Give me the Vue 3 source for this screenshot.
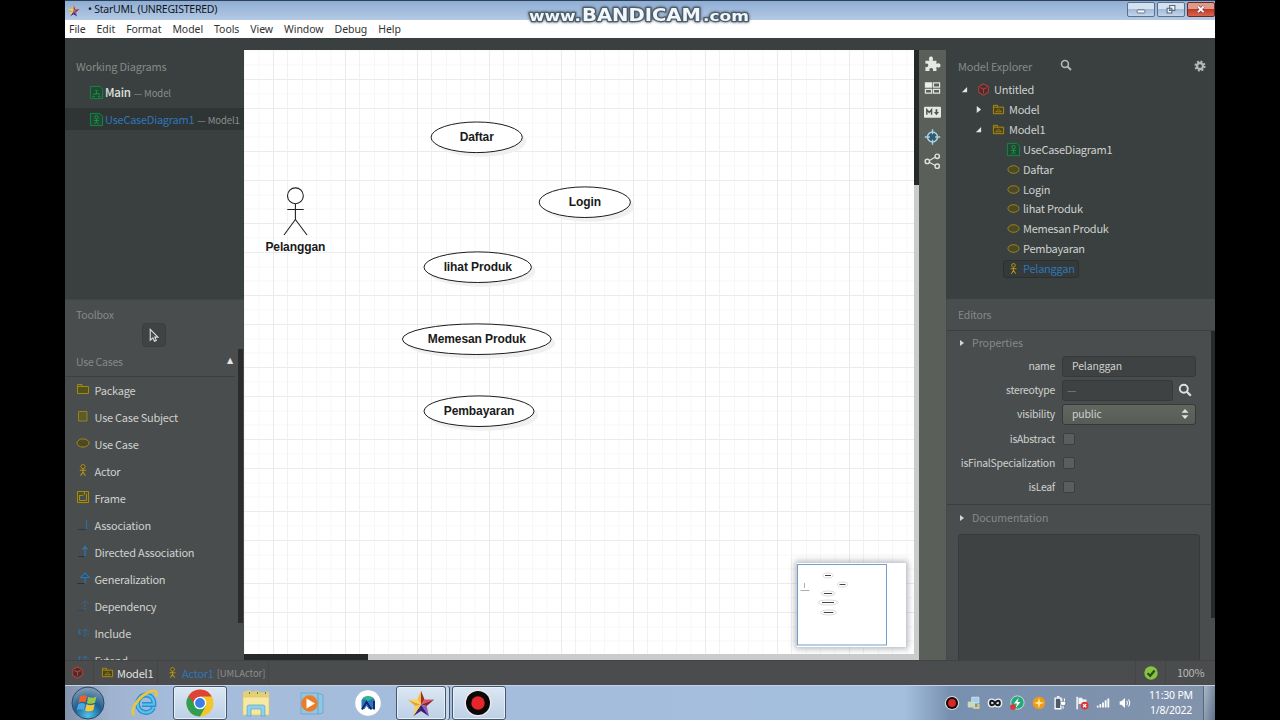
<template>
  <div class="screen">
    <svg class="sprite" xmlns="http://www.w3.org/2000/svg">
      <symbol id="cube" viewBox="0 0 14 14"><path d="M7 1 12.2 3.8V10L7 13 1.8 10V3.8ZM3.5 4.8 7 6.6 10.5 4.8M7 6.6V11" fill="#4a2c2c" stroke="#b3403a" stroke-width="1.1" /></symbol>
      <symbol id="package" viewBox="0 0 14 14"><path d="M1.5 4.5H12.5V11.5H1.5ZM1.5 4.5V2.5H6V4.5" fill="#55501c" stroke="#9c8a16" /></symbol>
      <symbol id="model" viewBox="0 0 14 14"><path d="M1.5 4.5H12.5V11.5H1.5ZM1.5 4.5V2.5H6V4.5" fill="#4a4418" stroke="#b08f16" /><path d="M4 9.5 7 6.5 10 9.5Z" fill="none" stroke="#a98a18" stroke-width=".9" /></symbol>
      <symbol id="subject" viewBox="0 0 14 14"><path d="M2.5 2.5H11V12H2.5Z" fill="#5d5c26" stroke="#8d8324" /></symbol>
      <symbol id="usecase" viewBox="0 0 14 14"><ellipse cx="7" cy="7" rx="6" ry="4.1" fill="#4b4a24" stroke="#a2861c" /></symbol>
      <symbol id="actor" viewBox="0 0 14 14"><path d="M7 5.6V9.5M3.8 7.2H10.2M7 9 4.6 12.6M7 9 9.4 12.6" fill="none" stroke="#b3921a" stroke-width="1.1" /><circle cx="7" cy="3.6" r="2" fill="#4b4519" stroke="#b3921a" /></symbol>
      <symbol id="frame" viewBox="0 0 14 14"><path d="M1.5 1.5H12.5V12.5H1.5ZM3.5 5V10.5H10.5V3.5M3.5 5.5H7L8.5 4V2" fill="#55501c" stroke="#a08d18" /></symbol>
      <symbol id="assoc" viewBox="0 0 14 14"><path d="M2 12.5H11" stroke="#223c50" fill="none" /><path d="M10.5 12.5V3" stroke="#2b6da0" stroke-width="1.2" fill="none" /></symbol>
      <symbol id="directed" viewBox="0 0 14 14"><path d="M2 12.5H9" stroke="#22364a" fill="none" /><path d="M9 12.5V2.5M6.5 5.5 9 2.5 11.5 5.5" stroke="#2b78b4" stroke-width="1.2" fill="none" /></symbol>
      <symbol id="general" viewBox="0 0 14 14"><path d="M1 12.5H9" stroke="#22364a" fill="none" /><path d="M9 12.5V6M5 6.5H13L9 2Z" stroke="#2b78b4" stroke-width="1.1" fill="#27506e" /></symbol>
      <symbol id="depend" viewBox="0 0 14 14"><path d="M1 12.5H9" stroke="#284c66" fill="none" /><path d="M9 12V3M6 5.5 9 3 12.5 5.5" stroke="#2d6f9e" stroke-dasharray="2 1.2" fill="none" /></symbol>
      <symbol id="include" viewBox="0 0 14 14"><path d="M1 12H7" stroke="#284c66" fill="none" /><path d="M2 5H5M3.5 5V8.500M2 8.500H5M9 12V4M6.500 6.500 9 4 12.500 6.500M11 9H13" stroke="#2b6da0" fill="none" /></symbol>
      <symbol id="classdiag" viewBox="0 0 16 16"><path d="M1.500 1.500H11.500L14.500 4.500V14.500H1.500Z" fill="#1d4a30" stroke="#168646" /><path d="M3.500 12.500H6.500M9.500 12.500H12.500M5 11V9.500H11V11M8 9.500V7M6.500 6H9.500" stroke="#22904f" fill="none" /></symbol>
      <symbol id="casediag" viewBox="0 0 16 16"><path d="M1.500 1.500H11.500L14.500 4.500V14.500H1.500Z" fill="#1d4a30" stroke="#168646" /><circle cx="8" cy="5.500" r="1.800" fill="none" stroke="#22904f" /><path d="M8 7.500V10.500M5.500 9H10.500M8 10.500 6 13M8 10.500 10 13" stroke="#22904f" fill="none" /></symbol>
      <symbol id="search" viewBox="0 0 14 14"><circle cx="5.8" cy="5.8" r="4" fill="none" stroke="currentColor" stroke-width="1.9" /><path d="M8.8 8.8 12.8 12.8" stroke="currentColor" stroke-width="2.3" /></symbol>
      <symbol id="star" viewBox="0 0 32 32">
        <path d="M16 2 20 12 16 18Z" fill="#a02a2c" /><path d="M16 2 12 12 16 18Z" fill="#f0c230" />
        <path d="M20 12H31L16 18Z" fill="#e0556a" /><path d="M31 12 22.500 19.500 16 18Z" fill="#8c2430" />
        <path d="M22.500 19.500 25 31 16 18Z" fill="#8a60b8" /><path d="M25 31 16 25V18Z" fill="#3a1c70" />
        <path d="M16 25 7 31 16 18Z" fill="#4a2478" /><path d="M7 31 9.500 19.500 16 18Z" fill="#f6d458" />
        <path d="M9.500 19.500 1 12 16 18Z" fill="#e8a424" /><path d="M1 12H12L16 18Z" fill="#fbd65c" />
      </symbol>
      <symbol id="rec" viewBox="0 0 28 28"><circle cx="14" cy="14" r="13.5" fill="#e9e9e9" /><circle cx="14" cy="14" r="12" fill="#080808" /><circle cx="14" cy="14" r="6.700" fill="#e8262a" /></symbol>
    </svg>

    <div class="window">
      <header class="titlebar">
        <svg class="app-icon"><use href="#star" /></svg>
        <span class="title">• StarUML (UNREGISTERED)</span>
        <div class="win-buttons">
          <span class="wb"><svg viewBox="0 0 28 15"><rect x="9.5" y="8" width="9" height="3.5" rx="1" fill="#fff" stroke="#55667c" /></svg></span>
          <span class="wb"><svg viewBox="0 0 28 15"><path d="M12.5 3H18.500V8.500H12.500ZM9.500 6H15V11.500H9.500Z" fill="#f4f7fb" stroke="#55667c" stroke-width="1.2" /><path d="M11.500 8.500H13.500" stroke="#55667c" /></svg></span>
          <span class="wb close"><svg viewBox="0 0 28 15"><path d="M10.500 4 17 10.500M17 4 10.500 10.500" stroke="#7a3a38" stroke-width="3.600" /><path d="M10.500 4 17 10.500M17 4 10.500 10.500" stroke="#fff" stroke-width="2.200" /></svg></span>
        </div>
      </header>
      <nav class="menubar">
        <span v-for="m in menus" :key="m">{{ m }}</span>
      </nav>

      <main class="workspace">
        <aside class="left">
          <section class="working">
            <h3>Working Diagrams</h3>
            <div v-for="d in diagrams" :key="d.name" :class="['diagram-row', { active: d.active }]">
              <svg><use :href="'#' + d.icon" /></svg>
              <b>{{ d.name }}</b><small>— {{ d.owner }}</small>
            </div>
          </section>
          <section class="toolbox">
            <h3>Toolbox</h3>
            <div class="pointer">
              <svg viewBox="0 0 12 16"><path d="M2 1.500V13L4.800 10.500 6.500 14.200 8.500 13.200 6.900 9.700H10.200Z" fill="#4a4d4e" stroke="#dcdedc" stroke-width="1.200" /></svg>
            </div>
            <div class="group"><span>Use Cases</span><i>▲</i></div>
            <ul class="tools">
              <li v-for="t in tools" :key="t.name"><svg><use :href="'#' + t.icon" /></svg>{{ t.name }}</li>
            </ul>
            <div class="thumb"></div>
          </section>
        </aside>

        <section class="center">
          <div class="canvas">
            <svg class="diagram" width="670" height="604" viewBox="244 50 670 604">
              <defs>
                <pattern id="grid" x="244" y="50" width="72" height="72" patternUnits="userSpaceOnUse">
                  <path d="M0.500 0V72M14.900 0V72M58.500 0V72M0 1H72M0 14.900H72M0 43.800H72" stroke="#f7f7f7" fill="none" />
                  <path d="M43.500 0V72" stroke="#f1f1f1" fill="none" />
                  <path d="M29.500 0V72M72.500 0V72M0 29.500H72M0 58.500H72" stroke="#ebebeb" fill="none" />
                </pattern>
              </defs>
              <rect x="244" y="50" width="670" height="604" fill="url(#grid)" />
              <g v-for="u in useCases" :key="u.name">
                <ellipse :cx="u.x + 4" :cy="u.y + 4" :rx="u.rx" ry="15.500" fill="#f0f0f0" />
                <ellipse :cx="u.x" :cy="u.y" :rx="u.rx" ry="15.300" fill="#fff" stroke="#1c1c1c" />
                <text :x="u.x" :y="u.y + 4" text-anchor="middle">{{ u.name }}</text>
              </g>
              <g fill="none" stroke="#222" stroke-width="1.100">
                <circle cx="295.400" cy="195.800" r="7.900" fill="#fff" />
                <path d="M295.400 203.700V219.500M287.300 209.500H303.700M295.400 219.500 284 235M295.400 219.500 307 235" />
              </g>
              <text x="295.300" y="251" text-anchor="middle">Pelanggan</text>
            </svg>
            <div class="minimap">
              <svg width="109" height="84" viewBox="0 0 109 84">
                <g v-for="m in miniNodes" :key="m.y">
                  <ellipse :cx="m.x" :cy="m.y" :rx="m.rx" ry="2.500" fill="#fff" stroke="#ccc" stroke-width=".7" />
                  <path :d="`M${m.x - m.rx * .6} ${m.y}h${m.rx * 1.2}`" stroke="#444" stroke-width="1" />
                </g>
                <path d="M7.500 20V25M3.500 27.500H12.500" stroke="#999" stroke-width=".8" />
                <rect x=".500" y="1.500" width="89" height="80.500" fill="none" stroke="#6fa0cc" />
              </svg>
            </div>
          </div>
          <div class="vscroll"><i></i></div>
          <div class="hscroll"><i></i></div>
        </section>

        <aside class="toolbar">
          <svg viewBox="0 0 18 18"><path d="M1.500 5.500H6C4.600 3.800 5.200 1 7.400 1S10.300 3.800 8.900 5.500H13.200V9C15 7.700 17.500 8.300 17.500 10.500S15 13.200 13.200 12V16.500H9.300C10.200 14.800 9.500 13.200 7.700 13.200S5 14.800 6 16.500H1.500V12C3.300 12.800 4.500 12 4.500 10.400S3.300 8 1.500 8.900Z" fill="#e6e8e4" /></svg>
          <svg viewBox="0 0 18 18"><path d="M1.500 3.500H8V8H1.500Z" fill="#f0f1ee" /><path d="M1.500 3.500H8V8H1.500ZM10 3.500H16.500V8H10ZM1.500 10.500H8V14.500H1.500ZM10 10.500H16.500V14.500H10Z" fill="none" stroke="#e3e5e1" stroke-width="1.300" /></svg>
          <svg viewBox="0 0 18 18"><rect x="0" y="3.500" width="18" height="11.500" rx="1" fill="#e6e8e4" /><path d="M3 12V6.500L5.500 9.500 8 6.500V12" fill="none" stroke="#50554f" stroke-width="1.500" /><path d="M13.200 6V10" stroke="#50554f" stroke-width="1.800" /><path d="M10.500 9H15.900L13.200 12.500Z" fill="#50554f" /></svg>
          <svg viewBox="0 0 18 18"><circle cx="9" cy="9" r="5.300" fill="#365a6c" stroke="#a5d3e6" stroke-width="1.700" /><path d="M9 .8V6.200M9 11.800V17.200M.8 9H6.200M11.800 9H17.200" stroke="#a5d3e6" stroke-width="1.500" /></svg>
          <svg viewBox="0 0 18 18"><path d="M4 9.500 13.500 4M4 9.500 13.500 14.500" stroke="#dfe1dd" stroke-width="1.300" /><g fill="#585d57" stroke="#dfe1dd" stroke-width="1.500"><circle cx="3.500" cy="9.500" r="2.300" /><circle cx="14" cy="4" r="2.300" /><circle cx="14" cy="14.500" r="2.300" /></g></svg>
        </aside>

        <aside class="right">
          <section class="explorer">
            <div class="explorer-head">
              <h3>Model Explorer</h3>
              <svg class="find"><use href="#search" /></svg>
              <svg class="gear" viewBox="0 0 12 12"><circle cx="6" cy="6" r="4.600" fill="none" stroke="#b4b7b4" stroke-width="2" stroke-dasharray="1.900 1.710" /><circle cx="6" cy="6" r="3" fill="none" stroke="#b4b7b4" stroke-width="2.300" /></svg>
            </div>
            <ul class="tree">
              <li v-for="n in tree" :key="n.name" :class="['level-' + n.level, { picked: n.picked }]">
                <svg v-if="n.level < 3" class="arrow" viewBox="0 0 8 8"><path :d="n.open ? 'M7 1V7H1Z' : 'M2 0 7 4 2 8Z'" fill="#e2e4e2" /></svg>
                <div class="node"><svg :class="{ doc: n.icon === 'casediag' }"><use :href="'#' + n.icon" /></svg><span>{{ n.name }}</span></div>
              </li>
            </ul>
          </section>
          <section class="editors">
            <h3>Editors</h3>
            <div class="props">
              <h4><i></i>Properties</h4>
              <div class="field"><label>name</label><div class="input">Pelanggan</div></div>
              <div class="field"><label>stereotype</label><div class="input short">—</div><svg><use href="#search" /></svg></div>
              <div class="field"><label>visibility</label><div class="input select">public<svg viewBox="0 0 8 10"><path d="M4 0 7.500 3.800H.500ZM4 10 7.500 6.200H.500Z" fill="#e0e2e0" /></svg></div></div>
              <div v-for="c in checks" :key="c" class="field"><label>{{ c }}</label><div class="check"></div></div>
            </div>
            <div class="docs">
              <h4><i></i>Documentation</h4>
              <div class="textarea"></div>
            </div>
            <div class="thumb"></div>
          </section>
        </aside>
      </main>

      <footer class="statusbar">
        <div class="crumb root"><svg><use href="#cube" /></svg></div>
        <div class="crumb mid"><svg><use href="#model" /></svg><b>Model1</b></div>
        <div class="crumb last"><svg><use href="#actor" /></svg><em>Actor1</em><small>[UMLActor]</small></div>
        <div class="ok"><svg viewBox="0 0 14 14"><circle cx="7" cy="7" r="6.700" fill="#86c440" /><path d="M3.500 7.200 6.200 9.800 10.600 4.500" fill="none" stroke="#2d4a1c" stroke-width="2.200" /></svg></div>
        <div class="zoom">100%</div>
      </footer>

      <footer class="taskbar">
        <div class="slot orb">
          <svg viewBox="0 0 34 34">
            <defs><radialGradient id="orbFill" cx=".5" cy=".9" r=".9"><stop offset="0" stop-color="#4fc3ea" /><stop offset=".5" stop-color="#1d5f92" /><stop offset="1" stop-color="#8ba2b8" /></radialGradient></defs>
            <circle cx="17" cy="17" r="16" fill="url(#orbFill)" stroke="#2d4766" />
            <path d="M9 10.500C11.500 9 14 9 16 10.200L14.500 16.500C12.500 15.300 10 15.500 7.500 16.800Z" fill="#e8622c" />
            <path d="M17.300 10.800C20 12 22.500 12 25.500 10.500L24 16.800C21 18.200 18.500 18 15.800 16.900Z" fill="#98c848" />
            <path d="M7.200 18C9.700 16.800 12 16.800 14.200 17.900L12.800 24C10.500 22.800 8 23 5.800 24Z" fill="#4aa6e4" />
            <path d="M15.500 18.300C18 19.500 20.800 19.600 23.700 18.200L22.200 24.300C19.500 25.600 16.800 25.700 14.100 24.500Z" fill="#f6c938" />
          </svg>
        </div>
        <div class="slot ie">
          <svg viewBox="0 0 30 30">
            <path d="M23.500 19.500C22 23 19 24.500 16 24.500 11 24.500 7.500 20.500 7.500 16S11 7 16 7C21 7 24.500 11 24 16.500H12" fill="none" stroke="#2592d0" stroke-width="4.800" />
            <path d="M23.500 19.500C22 23 19 24.500 16 24.500 11 24.500 7.500 20.500 7.500 16S11 7 16 7C21 7 24.500 11 24 16.500H12" fill="none" stroke="#5cc0ee" stroke-width="2.200" />
            <path d="M4.500 27C-1 23 8 9.500 18 4.500 25 1 28 3 26 8.500" fill="none" stroke="#ecc63a" stroke-width="2.600" />
          </svg>
        </div>
        <div class="slot task">
          <svg viewBox="0 0 28 28">
            <circle cx="14" cy="14" r="13.500" fill="#f4c62d" />
            <path d="M14 14 2.300 7.250A13.500 13.500 0 0 0 14 27.500L19.500 17.500Z" fill="#2f9e4e" />
            <path d="M14 14H8L2.300 7.250A13.500 13.500 0 0 1 25.800 7.500H14Z" fill="#dd4336" />
            <circle cx="14" cy="14" r="6.300" fill="#fff" /><circle cx="14" cy="14" r="4.900" fill="#3c7fe6" />
          </svg>
        </div>
        <div class="slot explorer-icon">
          <svg viewBox="0 0 30 28">
            <path d="M2 3 9 1 10.500 3 17 1.500 18.500 3.500 28 2.500V24H2Z" fill="#e5cf75" /><path d="M2 8H28V26H2Z" fill="#f6e9a2" stroke="#dcc266" stroke-width=".6" />
            <path d="M8 4H9M16 4H17M24 4H25" stroke="#3f8a54" stroke-width="2" />
            <path d="M6 27V18Q6 16 8 16H22Q24 16 24 18V27H20V20H10V27Z" fill="#8fd0ea" stroke="#5da4cc" stroke-width=".7" />
          </svg>
        </div>
        <div class="slot media">
          <svg viewBox="0 0 26 24"><path d="M3 2H20L25 4V22L20 23H3Z" fill="#8fc6e4" stroke="#6aa2c6" stroke-width=".8" /><path d="M20 2V23" stroke="#6aa2c6" /><circle cx="11.500" cy="12.500" r="8.300" fill="#ec7d28" /><path d="M8.500 7.500 17 12.500 8.500 17.500Z" fill="#fff" /></svg>
        </div>
        <div class="slot studio">
          <svg viewBox="0 0 28 28"><circle cx="14" cy="14" r="12.800" fill="#fff" /><path d="M7.500 18V11.500A7 5.500 0 0 1 21 11.500V20H7.500Z" fill="#2b77c4" /><path d="M8.500 9A7 5.500 0 0 1 19.500 9L14 12Z" fill="#35b58a" /><path d="M8 20.500 12.500 13 17.500 20.500M20 12V20.500" stroke="#16275e" stroke-width="1.800" fill="none" /><path d="M10 21 12.500 17 15.500 21Z" fill="#fff" /></svg>
        </div>
        <div class="slot task stacked"><svg><use href="#star" /></svg></div>
        <div class="slot task rec"><svg><use href="#rec" /></svg></div>

        <div class="tray">
          <svg viewBox="0 0 18 18"><circle cx="9" cy="9" r="8" fill="#d9d9d9" /><circle cx="9" cy="9" r="6.800" fill="#160808" /><circle cx="9" cy="9" r="4.400" fill="#d6282b" /></svg>
          <svg viewBox="0 0 18 18"><path d="M6.500 2.500H14.500V9H6.500Z" fill="#9fd0e8" stroke="#d8e4ee" /><path d="M2.500 8H9.500V13.500H2.500Z" fill="#c9dfa0" stroke="#d0dce0" /><path d="M8 14.500H14V10" stroke="#d9c680" stroke-width="2.500" fill="none" /></svg>
          <svg viewBox="0 0 18 18"><path d="M9 9C7 5 3 5.500 3 9S7 13 9 9 15 5.500 15 9 11 13 9 9Z" fill="none" stroke="#eceff2" stroke-width="4.500" /><path d="M9 9C7 5.500 3.500 6 3.500 9S7 12.500 9 9 14.500 5.500 14.500 9 11 12.500 9 9Z" fill="none" stroke="#14181c" stroke-width="2.200" /></svg>
          <svg viewBox="0 0 18 18"><circle cx="9.500" cy="8.500" r="7.500" fill="#28a878" stroke="#c8ecdc" /><path d="M11 3 5.500 9.500H9L7.500 14.500 13 8H9.500Z" fill="#fff" /><circle cx="4.500" cy="13.500" r="3.200" fill="#d83a3a" /></svg>
          <svg viewBox="0 0 18 18"><circle cx="9" cy="9" r="7" fill="#ee9a1c" /><path d="M9 3.500 10.300 7.700 14.500 9 10.300 10.300 9 14.500 7.700 10.300 3.500 9 7.700 7.700Z" fill="#ffe98a" /></svg>
          <svg viewBox="0 0 18 18"><path d="M3.500 3.500H10V15.500H3.500Z" fill="#4c5a6c" stroke="#fff" stroke-width="1.500" /><path d="M5.500 2H8.500" stroke="#fff" stroke-width="1.500" /><path d="M9.500 7H15.500V10Q15.500 12 12.500 12 9.500 12 9.500 10ZM11 4.500V7M14 4.500V7M12.500 12V15.500" stroke="#3d4a5c" stroke-width=".6" fill="#fff" /><path d="M11 4V7M14 4V7M12.500 12V15.500" stroke="#fff" stroke-width="1.300" /></svg>
          <svg viewBox="0 0 18 18"><path d="M3.500 2V16" stroke="#fff" stroke-width="1.600" /><path d="M5 3H9L10 5H14V10H5Z" fill="#f5f5f5" /><circle cx="12" cy="12" r="4.300" fill="#dc3434" /><path d="M10.200 10.200 13.800 13.800M13.800 10.200 10.200 13.800" stroke="#fff" stroke-width="1.400" /></svg>
          <svg viewBox="0 0 18 18"><path d="M3 14V12M6 14V10.500M9 14V8.500M12 14V6M15 14V4" stroke="#fff" stroke-width="2" /></svg>
          <svg viewBox="0 0 18 18"><path d="M3 7H5L9 3.500V14.500L5 11H3Z" fill="#fff" /><path d="M11 6.500Q12.500 9 11 11.500M13 5Q15.500 9 13 13" stroke="#fff" stroke-width="1.200" fill="none" /></svg>
        </div>
        <div class="clock"><span>11:30 PM</span><span>1/8/2022</span></div>
        <div class="peek"></div>
      </footer>

      <svg class="watermark" width="240" height="26" viewBox="520 2 240 26">
        <g class="glow">
          <text x="529" y="21" font-size="14" textLength="52" lengthAdjust="spacingAndGlyphs">www.</text>
          <text x="582" y="21" font-size="17" textLength="119" lengthAdjust="spacingAndGlyphs">BANDICAM</text>
          <text x="703" y="21" font-size="14" textLength="46" lengthAdjust="spacingAndGlyphs">.com</text>
        </g>
      </svg>
    </div>
  </div>
</template>

<script setup>
const menus = ['File', 'Edit', 'Format', 'Model', 'Tools', 'View', 'Window', 'Debug', 'Help']

const diagrams = [
  { name: 'Main', owner: 'Model', icon: 'classdiag' },
  { name: 'UseCaseDiagram1', owner: 'Model1', icon: 'casediag', active: true },
]

const tools = [
  { name: 'Package', icon: 'package' },
  { name: 'Use Case Subject', icon: 'subject' },
  { name: 'Use Case', icon: 'usecase' },
  { name: 'Actor', icon: 'actor' },
  { name: 'Frame', icon: 'frame' },
  { name: 'Association', icon: 'assoc' },
  { name: 'Directed Association', icon: 'directed' },
  { name: 'Generalization', icon: 'general' },
  { name: 'Dependency', icon: 'depend' },
  { name: 'Include', icon: 'include' },
  { name: 'Extend', icon: 'include' },
]

const useCases = [
  { name: 'Daftar', x: 476.7, y: 137.3, rx: 45.6 },
  { name: 'Login', x: 584.8, y: 202.2, rx: 45.6 },
  { name: 'lihat Produk', x: 477.7, y: 267.2, rx: 53.7 },
  { name: 'Memesan Produk', x: 476.8, y: 339.2, rx: 74.4 },
  { name: 'Pembayaran', x: 479, y: 411.2, rx: 55 },
]

const miniNodes = [
  { x: 31, y: 12.5, rx: 5 },
  { x: 45.5, y: 21.5, rx: 5 },
  { x: 31, y: 30.5, rx: 7 },
  { x: 31, y: 39.5, rx: 10 },
  { x: 31.5, y: 49.5, rx: 8 },
]

const tree = [
  { name: 'Untitled', icon: 'cube', level: 1, open: true },
  { name: 'Model', icon: 'model', level: 2 },
  { name: 'Model1', icon: 'model', level: 2, open: true },
  { name: 'UseCaseDiagram1', icon: 'casediag', level: 3 },
  { name: 'Daftar', icon: 'usecase', level: 3 },
  { name: 'Login', icon: 'usecase', level: 3 },
  { name: 'lihat Produk', icon: 'usecase', level: 3 },
  { name: 'Memesan Produk', icon: 'usecase', level: 3 },
  { name: 'Pembayaran', icon: 'usecase', level: 3 },
  { name: 'Pelanggan', icon: 'actor', level: 3, picked: true },
]

const checks = ['isAbstract', 'isFinalSpecialization', 'isLeaf']
</script>

<style>
body { margin: 0; background: #000; overflow: hidden; }
</style>

<style scoped>
* { box-sizing: border-box; }
ul, h3, h4 { margin: 0; padding: 0; list-style: none; font-weight: 400; }
svg { display: block; flex: none; }
i { font-style: normal; }
.sprite { position: absolute; width: 0; height: 0; }
.screen { width: 1280px; height: 720px; padding: 0 65px; background: #000; }
.window { position: relative; width: 1150px; height: 720px; display: flex; flex-direction: column; font-family: "Noto Sans CJK SC", "Noto Sans", sans-serif; font-size: 11px; letter-spacing: -.25px; line-height: 16px; color: #cfd1cf; white-space: nowrap; }

.titlebar { height: 20px; display: flex; align-items: center; padding-left: 2px; background: linear-gradient(#8fadd3, #b4cae5); border-top: 1px solid #2c4058; font-family: "Noto Sans", sans-serif; color: #10151c; }
.app-icon { width: 13px; height: 13px; }
.title { margin: -3px 0 0 8px; font-size: 10.5px; letter-spacing: -.24px; }
.win-buttons { margin-left: auto; align-self: flex-start; display: flex; gap: 2px; }
.wb { width: 28px; height: 15px; margin-top: 1px; border: 1px solid #5b7089; border-radius: 2px; background: linear-gradient(#d3e1f0 45%, #a4bcd8 50%, #c2d5ea); }
.wb svg { width: 26px; height: 13px; }
.wb.close { border-color: #6b2a24; background: linear-gradient(#e09a8c 45%, #c3392a 50%, #d8654c); }
.menubar { height: 18px; flex: none; display: flex; align-items: center; gap: 11px; padding: 0 0 1px 4px; background: #fff; color: #333; font-family: "Noto Sans", sans-serif; font-size: 10.5px; letter-spacing: -.06px; }

.workspace { height: 622px; flex: none; display: flex; background: #3a403f; }
h3 { font-size: 11px; letter-spacing: -.2px; color: #858a88; }
.left { width: 179px; display: flex; flex-direction: column; }
.working { height: 261px; padding-top: 20px; }
.working h3 { padding-left: 11px; }
.diagram-row { height: 22px; display: flex; align-items: center; padding-left: 24px; margin-top: 7px; }
.diagram-row + .diagram-row { margin-top: 5px; }
.diagram-row svg { width: 15px; height: 15px; }
.diagram-row b { margin-left: 1px; font-weight: 500; color: #dfe1df; font-size: 11.5px; }
.diagram-row small { margin: 1px 0 0 3px; font-size: 9.5px; letter-spacing: -.1px; color: #8b8f8d; }
.diagram-row.active { background: #2f3435; }
.diagram-row.active b { color: #2f76b8; font-weight: 400; font-size: 11px; letter-spacing: -.25px; }
.toolbox { position: relative; height: 361px; overflow: hidden; background: #4a4d4e; border-top: 1px solid #414545; display: flex; flex-direction: column; }
.toolbox h3 { padding: 7px 0 1px 11px; font-size: 10.5px; }
.pointer { width: 24px; height: 24px; flex: none; margin: -1px 0 0 77px; border: 1px solid #3b3e3f; border-radius: 4px; background: #404344; display: flex; align-items: center; justify-content: center; }
.pointer svg { width: 12px; height: 15px; }
.group { height: 28px; flex: none; margin: 2px 9px 0 0; padding: 0 2px 2px 11px; display: flex; align-items: center; justify-content: space-between; border-bottom: 1px solid #3c4041; font-size: 10.5px; color: #858a88; }
.group i { font-family: "DejaVu Sans", sans-serif; color: #e4e6e4; font-size: 8px; margin-top: -2px; }
.tools li { height: 27px; display: flex; align-items: center; gap: 4.5px; padding: 0 0 2px 11px; }
.tools svg { width: 14px; height: 14px; margin-top: -2px; }
.toolbox .thumb { position: absolute; right: 1px; top: 49px; width: 5px; height: 274px; background: #2a2c2d; }

.center { width: 675px; padding-top: 12px; display: grid; grid-template: 604px 6px / 670px 5px; background: #3a403f; }
.canvas { position: relative; background: #fff; overflow: hidden; }
.diagram text { font: bold 12px "Liberation Sans", Arial, sans-serif; letter-spacing: -.1px; fill: #1a1a1a; }
.minimap { position: absolute; left: 553px; top: 513px; width: 109px; height: 84px; background: #fff; box-shadow: 0 0 6px 2px rgba(90, 100, 110, .45); }
.vscroll { background: #c9cccb; }
.vscroll i { display: block; height: 135px; background: #25292a; }
.hscroll { grid-column: 1 / 3; background: #c9cccb; }
.hscroll i { display: block; width: 124px; height: 6px; background: #25292a; }
.toolbar { width: 27px; height: 610px; margin-top: 12px; padding: 5px 0 0 5px; display: flex; flex-direction: column; gap: 6.2px; background: #5a5f59; }
.toolbar svg { width: 17px; height: 18px; }

.right { width: 269px; display: flex; flex-direction: column; }
.explorer { height: 261px; padding-top: 18px; }
.explorer-head { height: 20px; display: flex; align-items: center; padding: 0 9px 0 12px; }
.explorer-head h3 { width: 74px; }
.explorer-head .find { width: 12px; height: 12px; margin: -3px 0 0 28px; color: #b4b7b4; }
.explorer-head .gear { width: 12px; height: 12px; margin-left: auto; }
.tree { padding-top: 4px; }
.tree li { height: 19.85px; display: flex; align-items: center; }
.tree .level-1 { padding-left: 15px; }
.tree .level-2 { padding-left: 29px; }
.tree .level-3 { padding-left: 57px; }
.arrow { width: 7px; height: 7px; }
.node { height: 18px; display: flex; align-items: center; gap: 3px; padding: 0 3px; border: 1px solid transparent; border-radius: 3px; }
.node span { margin-top: -1px; }
.level-1 .node { margin-left: 5px; }
.level-2 .node { margin-left: 6px; }
.level-1 .node, .level-2 .node { gap: 4px; }
.level-1 .node, .level-2 .node { padding-left: 2px; }
.node svg { width: 13px; height: 13px; }
.level-1 .node svg, .level-2 .node svg { margin-left: 1px; }
.node svg.doc { width: 15px; height: 15px; margin: 0 -1px; }
.picked .node { border-color: #2b3031; background: #343939; color: #2f76b8; }

.editors { position: relative; height: 361px; overflow: hidden; background: #4a4d4e; border-left: 1px solid #454948; }
.editors h3 { height: 32px; padding: 8px 0 0 11px; border-bottom: 1px solid #3b3f3f; font-size: 10.5px; }
h4 { display: flex; align-items: center; gap: 8px; padding-left: 13px; font-size: 10.6px; letter-spacing: -.05px; color: #858a88; }
h4 i { border: 3px solid transparent; border-left: 4px solid #d4d6d4; border-right: 0; }
.props { height: 174px; padding-top: 4px; margin-right: 4px; border-bottom: 1px solid #3b3f3f; }
.props h4 { margin-bottom: 3px; }
.field { height: 24.2px; display: flex; align-items: center; font-size: 10.4px; }
.field label { width: 108px; margin-right: 7px; text-align: right; }
.input { width: 134px; height: 21px; padding: 0 9px; border: 1px solid #35393a; border-radius: 3px; background: #3e4242; line-height: 18px; letter-spacing: -.1px; }
.input.short { width: 111px; color: #7a7e7c; padding-left: 4px; }
.field > svg { width: 14px; height: 14px; margin-left: 5px; color: #dfe1df; }
.select { display: flex; justify-content: space-between; align-items: center; padding-right: 6px; background: linear-gradient(#61665f, #575c57); }
.select svg { width: 8px; height: 10px; }
.check { width: 12px; height: 12px; margin-left: 1px; border: 1px solid #3b3f3f; border-radius: 2px; background: #5a5e5c; }
.docs h4 { padding-top: 5px; }
.textarea { width: 242px; height: 140px; margin: 8px 0 0 11px; border: 1px solid #363a3a; border-radius: 3px; background: #3e4242; }
.editors .thumb { position: absolute; right: 0; top: 32px; width: 4px; height: 287px; background: #272a2b; }

.statusbar { height: 25px; flex: none; display: flex; align-items: center; background: #4a4c4d; border-top: 1px solid #404343; }
.crumb { height: 24px; display: flex; align-items: center; padding-bottom: 1px; border-right: 1px solid #434647; }
.crumb svg { width: 13px; height: 13px; }
.crumb.root { width: 29px; padding-left: 6px; }
.crumb.mid { width: 64px; padding-left: 7px; gap: 3px; }
.crumb.last { width: 111px; padding-left: 8px; gap: 3px; }
.crumb b { font-weight: 400; color: #e0e2e0; }
.crumb em { font-style: normal; color: #2f76b8; }
.crumb small { font-size: 9.5px; letter-spacing: -.1px; color: #8b8f8d; }
.ok { width: 31px; height: 24px; margin-left: auto; padding: 5px 0 0 8px; border: solid #434647; border-width: 0 1px; }
.ok svg { width: 14px; height: 14px; }
.zoom { width: 49px; padding: 0 0 2px 11px; font-size: 11px; letter-spacing: -.3px; color: #b7bab8; }

.taskbar { height: 35px; flex: none; display: flex; align-items: center; border-top: 1px solid #c4d2e2; background: linear-gradient(90deg, #8292ab 0, #9fb3cf 45px, #a5bcdb 110px, #a4bedd 840px, #7890b0 885px, #8293ab 100%); }
.slot { height: 34px; display: flex; align-items: center; justify-content: center; }
.orb { width: 46px; }
.orb svg { width: 34px; height: 34px; }
.ie { width: 62px; padding-left: 6px; }
.ie svg { width: 30px; height: 30px; }
.task { width: 54px; border: 1px solid #46566c; border-radius: 3px; background: linear-gradient(#dbe7f3, #bdd0e6); box-shadow: inset 0 0 0 1px #e6f0f8; }
.task svg { width: 28px; height: 28px; }
.explorer-icon { width: 58px; }
.explorer-icon svg { width: 30px; height: 28px; }
.media { width: 52px; }
.media svg { width: 26px; height: 24px; }
.studio { width: 59px; padding-left: 2px; }
.studio svg { width: 28px; height: 28px; }
.stacked { width: 50px; margin-right: 6px; padding-right: 1px; box-shadow: inset 0 0 0 1px #e6f0f8, 3px 0 0 #c6d6e8, 4px 0 0 #46566c; }
.task.rec { padding-right: 2px; }
.tray { margin-left: auto; width: 200px; display: flex; justify-content: space-between; padding: 0 6px 0 5px; }
.tray svg { width: 16px; height: 16px; }
.clock { width: 58px; display: flex; flex-direction: column; align-items: center; margin: 0 3px; font-family: "Noto Sans", sans-serif; font-size: 10.5px; line-height: 15px; color: #fff; letter-spacing: -.2px; }
.peek { width: 12px; height: 34px; border-left: 1px solid #56677f; background: linear-gradient(100deg, #aab8c8, #5e7088); }

.watermark { position: absolute; left: 455px; top: 2px; }
.glow { font-family: "DejaVu Sans", sans-serif; font-weight: bold; fill: #f2f7fa; stroke: #4b5c6c; stroke-width: 2.4px; stroke-linejoin: round; paint-order: stroke; filter: drop-shadow(0 0 1.5px #4b5c6c); letter-spacing: 0; }
</style>
